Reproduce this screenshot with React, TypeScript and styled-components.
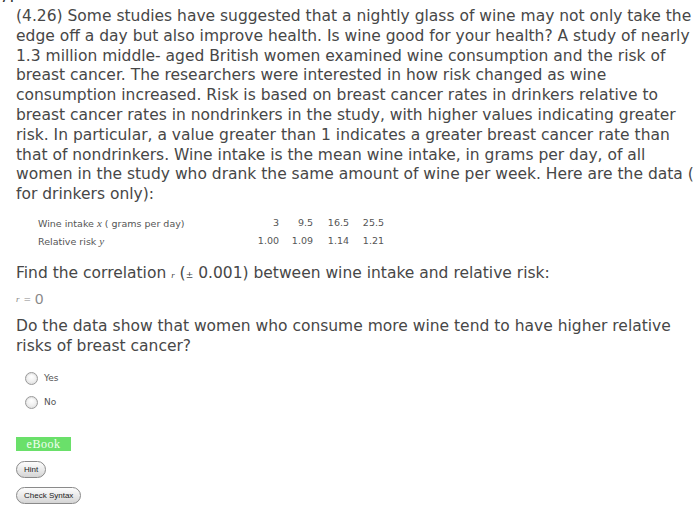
import React from 'react';
import styled, { createGlobalStyle } from 'styled-components';

const GlobalStyle = createGlobalStyle`
  body {
    margin: 0;
    background: #fff;
    font-family: "DejaVu Sans", Verdana, sans-serif;
    color: #474747;
  }
`;

const Page = styled.div`
  width: 700px;
  height: 521px;
  overflow: hidden;
  padding-left: 16px;
  box-sizing: border-box;
`;

const QuestionNumber = styled.div`
  margin-left: -16px;
  margin-top: -13px;
  height: 20px;
  font-size: 15px;
  line-height: 20px;
  color: #333;
`;

const Prose = styled.p`
  margin: 0;
  font-size: 15.5px;
  line-height: 19.8px;
  white-space: nowrap;
`;

const DataTable = styled.table`
  margin: 9px 0 0 22px;
  border-collapse: collapse;
  font-size: 9.5px;
  color: #555;

  td {
    padding: 0;
    height: 18px;
  }
`;

const LabelCell = styled.td`
  width: 208px;
  text-align: left;
`;

const NumCell = styled.td<{ $w: number }>`
  width: ${(p) => p.$w}px;
  text-align: right;
`;

const Var = styled.span`
  font-family: "Liberation Serif", serif;
  font-style: italic;
  font-size: 11px;
`;

const Question = styled(Prose)`
  margin-top: 14px;
`;

const Answer = styled.div`
  margin-top: 3px;
  height: 20px;
  display: flex;
  align-items: center;
  gap: 4px;
  color: #888;
`;

const SmallR = styled.span`
  font-family: "Liberation Serif", serif;
  font-style: italic;
  font-size: 9px;
`;

const Eq = styled.span`
  font-size: 9px;
`;

const Zero = styled.span`
  font-size: 15px;
  font-family: "Liberation Sans", sans-serif;
  color: #888;
`;

const SecondQuestion = styled(Prose)`
  margin-top: 8px;
`;

const Options = styled.div`
  margin-top: 16px;
  display: flex;
  flex-direction: column;
  gap: 12px;
  padding-left: 9px;
`;

const Option = styled.label`
  display: flex;
  align-items: center;
  gap: 6px;
  height: 12px;
  font-size: 9px;
  color: #555;
`;

const Radio = styled.span`
  width: 11px;
  height: 11px;
  border-radius: 50%;
  border: 1px solid #9a9a9a;
  background: radial-gradient(circle at 50% 35%, #fff 0%, #f0f0f0 50%, #d6d6d6 100%);
  box-shadow: inset 0 1px 1px rgba(0, 0, 0, 0.08);
`;

const EBook = styled.div`
  margin-top: 29px;
  width: 55px;
  height: 14px;
  background: #6ae06a;
  color: #f2fff2;
  font-family: "Liberation Serif", serif;
  font-size: 12px;
  line-height: 14px;
  text-align: center;
  letter-spacing: 0.5px;
`;

const Buttons = styled.div`
  margin-top: 10px;
  display: flex;
  flex-direction: column;
  align-items: flex-start;
  gap: 9px;
`;

const PillButton = styled.button`
  height: 17px;
  padding: 0 7px;
  border: 1px solid #8a8a8a;
  border-radius: 9px;
  background: linear-gradient(#fdfdfd, #e6e6e6 60%, #d4d4d4);
  font-family: "Liberation Sans", Arial, sans-serif;
  font-size: 8px;
  color: #222;
  line-height: 15px;
`;

const intake = ['3', '9.5', '16.5', '25.5'];
const risk = ['1.00', '1.09', '1.14', '1.21'];
const widths = [33, 34, 36, 35];

export default function App() {
  return (
    <>
      <GlobalStyle />
      <Page>
        <QuestionNumber>7.</QuestionNumber>
        <Prose>
          (4.26) Some studies have suggested that a nightly glass of wine may not only take the
          <br />
          edge off a day but also improve health. Is wine good for your health? A study of nearly
          <br />
          1.3 million middle- aged British women examined wine consumption and the risk of
          <br />
          breast cancer. The researchers were interested in how risk changed as wine
          <br />
          consumption increased. Risk is based on breast cancer rates in drinkers relative to
          <br />
          breast cancer rates in nondrinkers in the study, with higher values indicating greater
          <br />
          risk. In particular, a value greater than 1 indicates a greater breast cancer rate than
          <br />
          that of nondrinkers. Wine intake is the mean wine intake, in grams per day, of all
          <br />
          women in the study who drank the same amount of wine per week. Here are the data (
          <br />
          for drinkers only):
        </Prose>
        <DataTable>
          <tbody>
            <tr>
              <LabelCell>
                Wine intake <Var>x</Var> ( grams per day)
              </LabelCell>
              {intake.map((v, i) => (
                <NumCell key={v} $w={widths[i]}>
                  {v}
                </NumCell>
              ))}
            </tr>
            <tr>
              <LabelCell>
                Relative risk <Var>y</Var>
              </LabelCell>
              {risk.map((v, i) => (
                <NumCell key={v} $w={widths[i]}>
                  {v}
                </NumCell>
              ))}
            </tr>
          </tbody>
        </DataTable>
        <Question>
          Find the correlation <SmallR>r</SmallR> (<Eq>±</Eq> 0.001) between wine intake and relative risk:
        </Question>
        <Answer>
          <SmallR>r</SmallR>
          <Eq>=</Eq>
          <Zero>0</Zero>
        </Answer>
        <SecondQuestion>
          Do the data show that women who consume more wine tend to have higher relative
          <br />
          risks of breast cancer?
        </SecondQuestion>
        <Options>
          <Option>
            <Radio />
            Yes
          </Option>
          <Option>
            <Radio />
            No
          </Option>
        </Options>
        <EBook>eBook</EBook>
        <Buttons>
          <PillButton>Hint</PillButton>
          <PillButton>Check Syntax</PillButton>
        </Buttons>
      </Page>
    </>
  );
}
